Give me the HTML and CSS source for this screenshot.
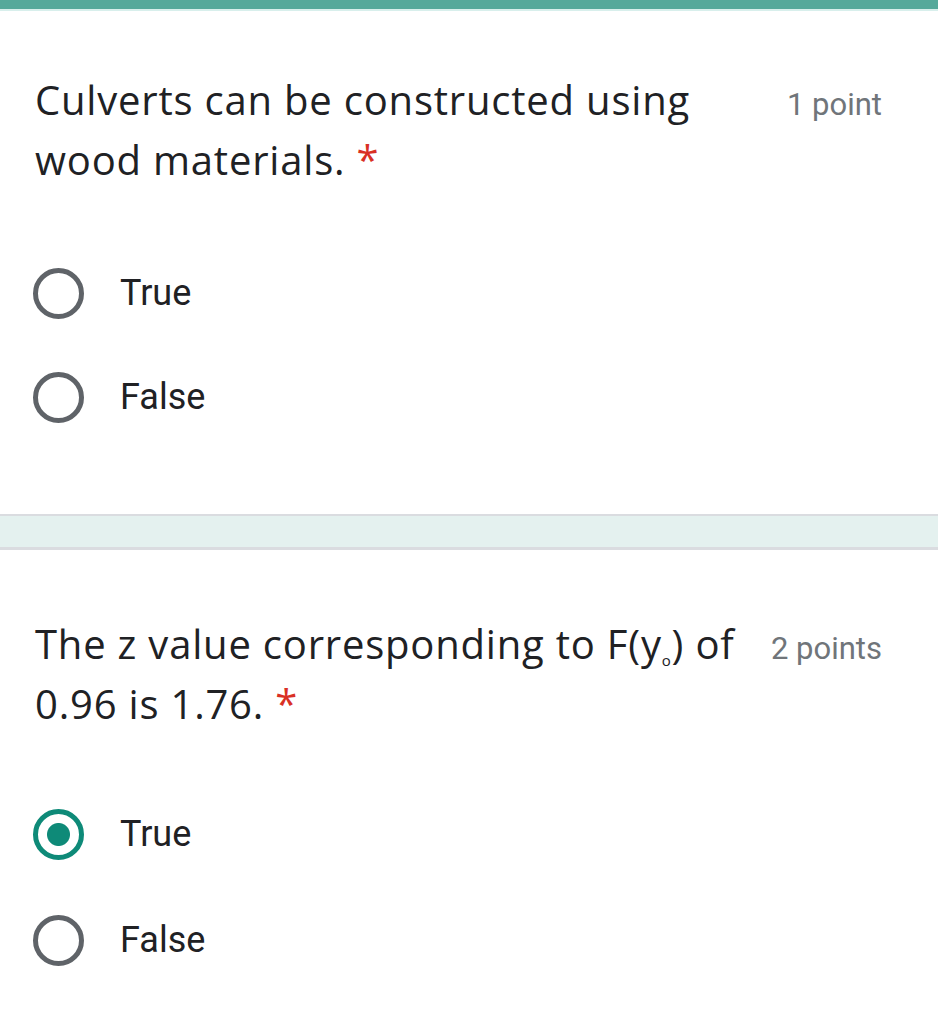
FILE: index.html
```html
<!DOCTYPE html>
<html lang="en">
<head>
<meta charset="utf-8">
<title>Form</title>
<link rel="stylesheet" href="styles.css">
</head>
<body>
<div class="topbar"></div>
<section class="card card-first">
  <div class="q-head">
    <div class="q-title">Culverts can be constructed using wood materials. <span class="req">*</span></div>
    <div class="q-points">1 point</div>
  </div>
  <div class="options">
    <div class="option"><span class="radio"></span><span class="label">True</span></div>
    <div class="option"><span class="radio"></span><span class="label">False</span></div>
  </div>
</section>
<div class="band"></div>
<section class="card card-second">
  <div class="q-head">
    <div class="q-title">The z value corresponding to F(y<span class="sub">o</span>) of 0.96 is 1.76. <span class="req">*</span></div>
    <div class="q-points">2 points</div>
  </div>
  <div class="options">
    <div class="option"><span class="radio checked"></span><span class="label">True</span></div>
    <div class="option"><span class="radio"></span><span class="label">False</span></div>
  </div>
</section>
</body>
</html>
```
FILE: styles.css
```css
html, body {
  margin: 0;
  padding: 0;
  background: #ffffff;
}
body {
  width: 938px;
  height: 1024px;
  overflow: hidden;
  font-family: Roboto, "Noto Sans", sans-serif;
  color: #202124;
}
.topbar {
  height: 9px;
  background: #56a99b;
  border-bottom: 2px solid #d8efec;
}
.card {
  background: #fff;
  padding: 0 56px 0 35px;
}
.card-first {
  padding-top: 59px;
  padding-bottom: 91px;
}
.card-second {
  padding-top: 64px;
}
.q-head {
  display: flex;
  align-items: baseline;
  justify-content: space-between;
}
.q-title {
  font-family: "Open Sans", Roboto, sans-serif;
  font-size: 40px;
  line-height: 60px;
  letter-spacing: 0.8px;
  width: 725px;
  color: #202124;
}
.req {
  color: #d93025;
  letter-spacing: 0;
}
.sub {
  font-size: 15px;
  vertical-align: -7px;
  line-height: 0;
}
.q-points {
  font-size: 31px;
  color: #70757a;
  white-space: nowrap;
}
.options {
  display: flex;
  flex-direction: column;
  gap: 52px;
}
.card-first .options {
  margin-top: 77px;
}
.card-second .options {
  margin-top: 74px;
}
.option {
  display: flex;
  align-items: center;
  height: 52px;
}
.card-second .option + .option {
  margin-top: 2px;
}
.radio {
  box-sizing: border-box;
  width: 51px;
  height: 51px;
  border: 5px solid #5f6368;
  border-radius: 50%;
  margin-left: -2px;
  margin-right: 36px;
  flex: none;
}
.radio.checked {
  border-color: #0e8a78;
  background: radial-gradient(circle, #0e8a78 0, #0e8a78 11px, #fff 12px);
}
.label {
  font-size: 36px;
  color: #202124;
}
.band {
  height: 31px;
  background: #e4f1ef;
  border-top: 2px solid #dadce0;
  border-bottom: 3px solid #dadce0;
}
```
